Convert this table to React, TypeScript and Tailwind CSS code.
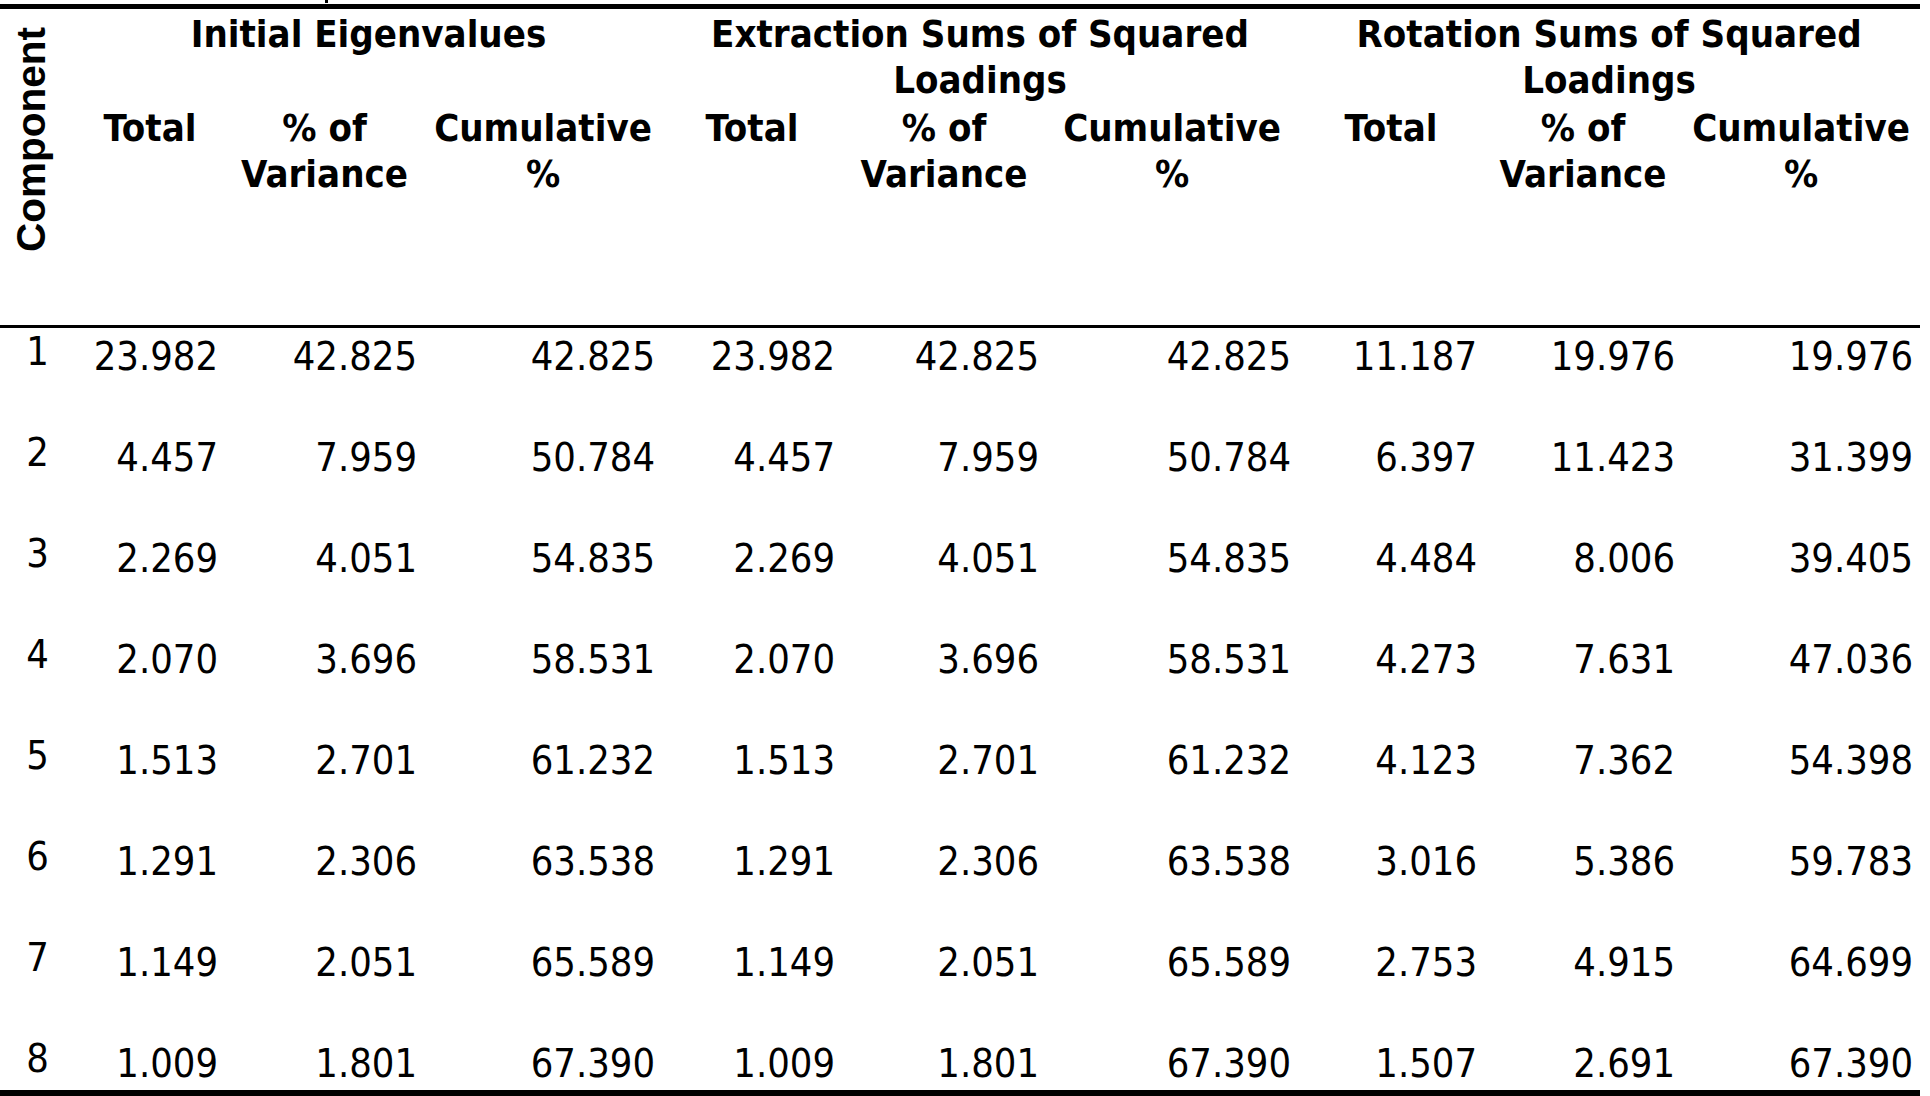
import React from "react";

const rows: string[][] = [
  ["1", "23.982", "42.825", "42.825", "23.982", "42.825", "42.825", "11.187", "19.976", "19.976"],
  ["2", "4.457", "7.959", "50.784", "4.457", "7.959", "50.784", "6.397", "11.423", "31.399"],
  ["3", "2.269", "4.051", "54.835", "2.269", "4.051", "54.835", "4.484", "8.006", "39.405"],
  ["4", "2.070", "3.696", "58.531", "2.070", "3.696", "58.531", "4.273", "7.631", "47.036"],
  ["5", "1.513", "2.701", "61.232", "1.513", "2.701", "61.232", "4.123", "7.362", "54.398"],
  ["6", "1.291", "2.306", "63.538", "1.291", "2.306", "63.538", "3.016", "5.386", "59.783"],
  ["7", "1.149", "2.051", "65.589", "1.149", "2.051", "65.589", "2.753", "4.915", "64.699"],
  ["8", "1.009", "1.801", "67.390", "1.009", "1.801", "67.390", "1.507", "2.691", "67.390"],
];

function SubHeaders() {
  return (
    <>
      <th className="border-b-[3px] border-black pt-[2px] align-top font-bold">Total</th>
      <th className="border-b-[3px] border-black pt-[2px] align-top font-bold">
        % of
        <br />
        Variance
      </th>
      <th className="border-b-[3px] border-black pt-[2px] align-top font-bold">
        Cumulative
        <br />%
      </th>
    </>
  );
}

export default function App() {
  return (
    <div className="relative h-[1096px] w-[1930px] overflow-hidden bg-white pt-[4px] text-black">
      {/* clipped glyph above the top rule */}
      <span className="absolute left-[325px] top-0 h-[3px] w-[3px] bg-black" />

      <table className="w-[1920px] table-fixed border-separate border-spacing-0 border-t-[5px] border-b-[6px] border-black font-['DejaVu_Sans_Condensed','DejaVu_Sans',sans-serif] text-[38px] leading-[46px] [font-stretch:condensed]">
        <colgroup>
          <col className="w-[75px]" />
          <col className="w-[150px]" />
          <col className="w-[199px]" />
          <col className="w-[238px]" />
          <col className="w-[180px]" />
          <col className="w-[204px]" />
          <col className="w-[252px]" />
          <col className="w-[186px]" />
          <col className="w-[198px]" />
          <col className="w-[238px]" />
        </colgroup>
        <thead>
          <tr className="h-[94px]">
            <th rowSpan={2} className="border-b-[3px] border-black p-0 align-top">
              <div className="flex pl-[11px] pt-[18px]">
                <span className="rotate-180 font-['Liberation_Sans',Arial,sans-serif] text-[40.5px] leading-[40px] font-bold [writing-mode:vertical-rl]">
                  Component
                </span>
              </div>
            </th>
            <th colSpan={3} className="pt-[2px] align-top font-bold">
              Initial Eigenvalues
            </th>
            <th colSpan={3} className="pt-[2px] align-top font-bold">
              Extraction Sums of Squared
              <br />
              Loadings
            </th>
            <th colSpan={3} className="pt-[2px] align-top font-bold">
              Rotation Sums of Squared
              <br />
              Loadings
            </th>
          </tr>
          <tr className="h-[225px]">
            <SubHeaders />
            <SubHeaders />
            <SubHeaders />
          </tr>
        </thead>
        <tbody className="text-[39.5px]">
          {rows.map((row, i) => (
            <tr key={row[0]} className={i === rows.length - 1 ? "h-[55px]" : "h-[101px]"}>
              {row.map((cell, j) =>
                j === 0 ? (
                  <td key={j} className="pt-0 text-center align-top">
                    {cell}
                  </td>
                ) : (
                  <td key={j} className="pt-[5px] pr-[7px] text-right align-top">
                    {cell}
                  </td>
                ),
              )}
            </tr>
          ))}
        </tbody>
      </table>
    </div>
  );
}
